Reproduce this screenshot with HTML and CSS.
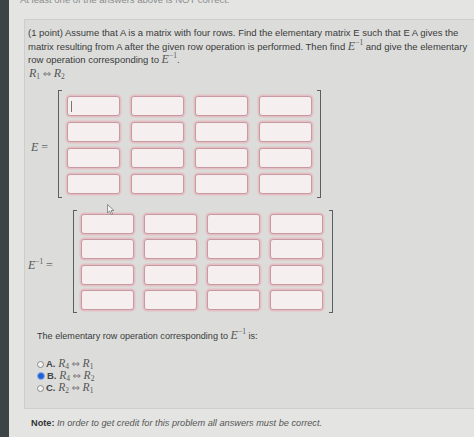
FILE: index.html
```html
<!DOCTYPE html>
<html>
<head>
<meta charset="utf-8">
<link rel="stylesheet" href="styles.css">
</head>
<body>
<div class="screen">
  <div class="strip"></div>
  <div class="page">
    <div class="warn">At least one of the answers above is NOT correct.</div>
    <div class="problem">
      <div class="intro">
        <div class="line">(1 point) Assume that A is a matrix with four rows. Find the elementary matrix E such that E A gives the</div>
        <div class="line">matrix resulting from A after the given row operation is performed. Then find <span class="m">E</span><sup class="sup">−1</sup> and give the elementary</div>
        <div class="line">row operation corresponding to <span class="m">E</span><sup class="sup">−1</sup>.</div>
        <div class="line mline"><span class="m">R</span><sub>1</sub> <span class="arr">⇔</span> <span class="m">R</span><sub>2</sub></div>
      </div>

      <div class="mrow mrow-e">
        <div class="label"><span class="m">E</span> <span class="eq">=</span></div>
        <div class="matrix">
          <div class="br br-l"></div>
          <div class="grid">
            <div class="cell"><span class="caret"></span></div><div class="cell"></div><div class="cell"></div><div class="cell"></div>
            <div class="cell"></div><div class="cell"></div><div class="cell"></div><div class="cell"></div>
            <div class="cell"></div><div class="cell"></div><div class="cell"></div><div class="cell"></div>
            <div class="cell"></div><div class="cell"></div><div class="cell"></div><div class="cell"></div>
          </div>
          <div class="br br-r"></div>
        </div>
      </div>

      <div class="mrow mrow-inv">
        <div class="label"><span class="m">E</span><sup class="sup">−1</sup> <span class="eq">=</span></div>
        <div class="matrix">
          <div class="br br-l"></div>
          <div class="grid">
            <div class="cell"></div><div class="cell"></div><div class="cell"></div><div class="cell"></div>
            <div class="cell"></div><div class="cell"></div><div class="cell"></div><div class="cell"></div>
            <div class="cell"></div><div class="cell"></div><div class="cell"></div><div class="cell"></div>
            <div class="cell"></div><div class="cell"></div><div class="cell"></div><div class="cell"></div>
          </div>
          <div class="br br-r"></div>
        </div>
        <svg class="pointer" width="8" height="11" viewBox="0 0 8 11"><path d="M0.5 0.5 L0.5 9 L2.6 7 L4.2 10.5 L5.6 9.9 L4.1 6.5 L7 6.5 Z" fill="#f4f4f4" stroke="#777" stroke-width="0.8"/></svg>
      </div>

      <div class="question">The elementary row operation corresponding to <span class="m">E</span><sup class="sup">−1</sup> is:</div>

      <div class="options">
        <div class="opt"><span class="radio"></span><b>A.</b> <span class="m">R</span><sub>4</sub> <span class="arr">⇔</span> <span class="m">R</span><sub>1</sub></div>
        <div class="opt"><span class="radio on"></span><b>B.</b> <span class="m">R</span><sub>4</sub> <span class="arr">⇔</span> <span class="m">R</span><sub>2</sub></div>
        <div class="opt"><span class="radio"></span><b>C.</b> <span class="m">R</span><sub>2</sub> <span class="arr">⇔</span> <span class="m">R</span><sub>1</sub></div>
      </div>
    </div>
    <div class="note"><b>Note:</b> <i>In order to get credit for this problem all answers must be correct.</i></div>
  </div>
</div>
</body>
</html>
```
FILE: styles.css
```css
html, body {
  margin: 0;
  padding: 0;
}
body {
  width: 474px;
  height: 437px;
  overflow: hidden;
  background: #e4e5e3;
  font-family: "Liberation Sans", Arial, sans-serif;
  color: #3a3a3a;
}
.screen {
  display: flex;
  height: 437px;
}
.strip {
  width: 9px;
  flex: none;
  background: #3d4446;
}
.page {
  flex: 1;
  overflow: hidden;
  padding-left: 15px;
}
.warn {
  font-size: 9.5px;
  line-height: 12px;
  color: #8a8d8e;
  margin-top: -6px;
  margin-left: -4px;
  height: 12px;
  white-space: nowrap;
}
.problem {
  margin-top: 13px;
  margin-right: -30px;
  background: #dcdddb;
  border: 1px solid #cdcecc;
  border-right: none;
  padding: 6px 0 15px 3px;
}
.intro {
  font-size: 9.5px;
  line-height: 13.7px;
}
.line {
  white-space: nowrap;
}
.m {
  font-family: "Liberation Serif", "Times New Roman", serif;
  font-style: italic;
  font-size: 12px;
  color: #555;
}
.sup {
  font-size: 7.5px;
  vertical-align: 5px;
  line-height: 0;
  font-family: "Liberation Serif", serif;
  color: #555;
}
sub {
  font-size: 7.5px;
  vertical-align: -2px;
  line-height: 0;
  font-family: "Liberation Serif", serif;
  color: #555;
}
.arr {
  font-family: "DejaVu Sans", sans-serif;
  font-size: 10px;
  color: #777;
}
.mline {
  padding-left: 1px;
}
.mrow {
  display: flex;
  align-items: center;
  position: relative;
}
.mrow-e {
  margin-top: 9px;
  padding-left: 3px;
}
.mrow-inv {
  margin-top: 12px;
  padding-left: 0;
}
.label {
  white-space: nowrap;
  font-size: 10px;
  padding-top: 8px;
}
.mrow-e .label {
  width: 27px;
}
.mrow-inv .label {
  width: 45px;
}
.eq {
  font-family: "Liberation Serif", serif;
  font-size: 12px;
  color: #666;
}
.matrix {
  display: flex;
  align-items: stretch;
}
.br {
  width: 3px;
  border: 1.5px solid #5c5e60;
}
.br-l {
  border-right: none;
}
.br-r {
  border-left: none;
}
.grid {
  display: grid;
  grid-template-columns: repeat(4, 53px);
  grid-auto-rows: 20px;
  column-gap: 11px;
  row-gap: 6px;
  padding: 6px 5px 4px 5px;
}
.mrow-inv .grid {
  column-gap: 10px;
  row-gap: 5.5px;
  padding: 4px 6px 3px 4px;
}
.cell {
  background: #f6eff0;
  border: 1px solid #c79aa1;
  border-radius: 3px;
  box-shadow: 0 0 0 1.5px #e4bfc4;
  position: relative;
}
.caret {
  position: absolute;
  left: 3px;
  top: 4px;
  width: 1px;
  height: 11px;
  background: #777;
}
.pointer {
  position: absolute;
  left: 79px;
  top: -6px;
}
.question {
  font-size: 9.1px;
  line-height: 14px;
  margin-top: 15px;
  padding-left: 9px;
}
.options {
  margin-top: 14px;
  padding-left: 9px;
  font-size: 9.5px;
}
.opt {
  height: 12px;
  line-height: 12px;
  white-space: nowrap;
}
.opt .m {
  font-size: 11.5px;
}
.opt b {
  color: #444;
}
.radio {
  display: inline-block;
  vertical-align: -1px;
  width: 7px;
  height: 7px;
  border-radius: 50%;
  border: 1px solid #8a8a8a;
  background: #f3f3f3;
  margin-right: 2px;
  box-sizing: border-box;
}
.radio.on {
  border: 1.5px solid #8fb0ea;
  background: #1f5fd8;
  width: 8px;
  height: 8px;
}
.note {
  font-size: 9.2px;
  margin-top: 9px;
  padding-left: 7px;
  white-space: nowrap;
}
.note b {
  color: #333;
}
.note i {
  color: #555;
}
```
